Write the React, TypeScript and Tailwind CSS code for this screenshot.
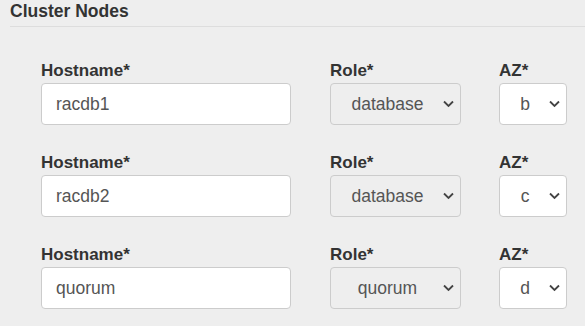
const nodes = [
  { host: 'racdb1', role: 'database', az: 'b' },
  { host: 'racdb2', role: 'database', az: 'c' },
  { host: 'quorum', role: 'quorum', az: 'd' },
];

function Chevron() {
  return (
    <svg
      className="pointer-events-none absolute right-[7px] top-1/2 -translate-y-1/2"
      width="11"
      height="7"
      viewBox="0 0 11 7"
      fill="none"
    >
      <polyline points="1,1 5.5,5.5 10,1" stroke="#444" strokeWidth="1.8" />
    </svg>
  );
}

function Label({ text }: { text: string }) {
  return <label className="mb-[2px] block text-[17px] font-bold leading-[20px] text-[#333]">{text}*</label>;
}

export default function App() {
  return (
    <div
      className="min-h-[326px] w-full bg-[#eeeeee] pl-[10px] text-[#333]"
      style={{ fontFamily: '"Liberation Sans", Arial, sans-serif' }}
    >
      <h2 className="border-b border-[#dddddd] pt-[1px] pb-[5px] text-[17.5px] font-bold leading-[20px]">
        Cluster Nodes
      </h2>

      <div className="flex flex-col gap-[28px] pt-[34px] pl-[31px]">
        {nodes.map((n) => (
          <div key={n.host} className="flex">
            <div className="w-[250px]">
              <Label text="Hostname" />
              <input
                defaultValue={n.host}
                className="h-[42px] w-full rounded border border-[#cccccc] bg-white pl-[14px] text-[17.5px] text-[#555] outline-none"
              />
            </div>

            <div className="ml-[39px] w-[131px]">
              <Label text="Role" />
              <div className="relative">
                <select
                  disabled
                  defaultValue={n.role}
                  className="h-[42px] w-full appearance-none rounded border border-[#cccccc] bg-[#eeeeee] pr-[18px] pl-[2px] text-center text-[17.5px] text-[#555] opacity-100 [text-align-last:center]"
                >
                  <option value="database">database</option>
                  <option value="quorum">quorum</option>
                </select>
                <Chevron />
              </div>
            </div>

            <div className="ml-[38px] w-[68px]">
              <Label text="AZ" />
              <div className="relative">
                <select
                  defaultValue={n.az}
                  className="h-[42px] w-full appearance-none rounded border border-[#cccccc] bg-white pr-[18px] pl-[2px] text-center text-[17.5px] text-[#555] outline-none [text-align-last:center]"
                >
                  <option value="a">a</option>
                  <option value="b">b</option>
                  <option value="c">c</option>
                  <option value="d">d</option>
                </select>
                <Chevron />
              </div>
            </div>
          </div>
        ))}
      </div>
    </div>
  );
}
